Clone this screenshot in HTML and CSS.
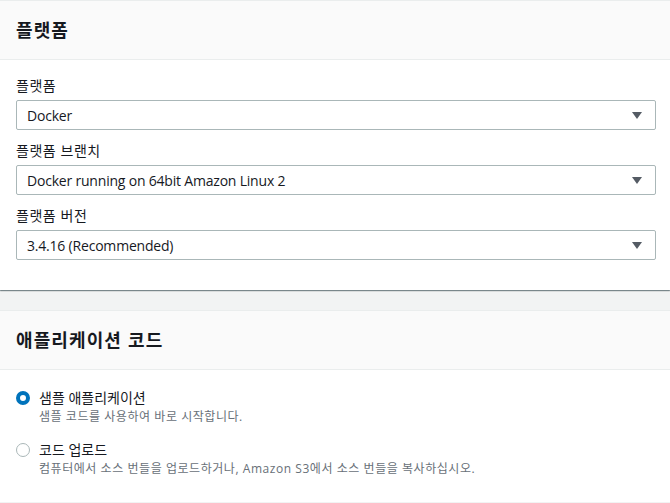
FILE: index.html
```html
<!DOCTYPE html>
<html lang="ko">
<head>
<meta charset="utf-8">
<link rel="stylesheet" href="styles.css">
</head>
<body>
<div class="page">
  <section class="card">
    <div class="card-header"><h2>플랫폼</h2></div>
    <div class="card-body form">
      <div class="field">
        <div class="label">플랫폼</div>
        <div class="select"><span class="value">Docker</span><span class="caret"></span></div>
      </div>
      <div class="field">
        <div class="label">플랫폼 브랜치</div>
        <div class="select"><span class="value">Docker running on 64bit Amazon Linux 2</span><span class="caret"></span></div>
      </div>
      <div class="field">
        <div class="label">플랫폼 버전</div>
        <div class="select"><span class="value">3.4.16 (Recommended)</span><span class="caret"></span></div>
      </div>
    </div>
  </section>
  <section class="card">
    <div class="card-header"><h2>애플리케이션 코드</h2></div>
    <div class="card-body radios">
      <div class="radio-item">
        <span class="radio checked"></span>
        <div class="radio-text">
          <div class="radio-label">샘플 애플리케이션</div>
          <div class="radio-desc">샘플 코드를 사용하여 바로 시작합니다.</div>
        </div>
      </div>
      <div class="radio-item">
        <span class="radio"></span>
        <div class="radio-text">
          <div class="radio-label">코드 업로드</div>
          <div class="radio-desc">컴퓨터에서 소스 번들을 업로드하거나, Amazon S3에서 소스 번들을 복사하십시오.</div>
        </div>
      </div>
    </div>
  </section>
</div>
</body>
</html>
```
FILE: styles.css
```css
html, body {
  margin: 0;
  padding: 0;
}
body {
  background: #f2f3f3;
  font-family: "Open Sans", "Noto Sans CJK KR", sans-serif;
  color: #16191f;
  font-size: 14px;
}
.page {
  display: flex;
  flex-direction: column;
  gap: 20px;
}
.card {
  background: #ffffff;
  border-top: 1px solid #eaeded;
  box-shadow: 0 1px 1px 0 rgba(0, 28, 36, 0.3), 1px 1px 1px 0 rgba(0, 28, 36, 0.15), -1px 1px 1px 0 rgba(0, 28, 36, 0.15);
}
.card-header {
  background: #fafafa;
  border-bottom: 1px solid #eaeded;
  height: 58px;
  display: flex;
  align-items: center;
  padding: 0 16px;
}
.card-header h2 {
  margin: 0;
  font-size: 18px;
  font-weight: 700;
  line-height: 22px;
  letter-spacing: 1.1px;
  font-family: "Noto Sans CJK KR", sans-serif;
  position: relative;
  top: -1px;
}
.form {
  padding: 15px 14px 30px 16px;
  display: flex;
  flex-direction: column;
  gap: 10px;
}
.field {
  display: flex;
  flex-direction: column;
  gap: 5px;
}
.label {
  line-height: 20px;
  font-size: 14px;
  letter-spacing: 0.5px;
  font-family: "Noto Sans CJK KR", sans-serif;
}
.select {
  height: 28px;
  border: 1px solid #aab7b8;
  border-radius: 2px;
  display: flex;
  align-items: center;
  justify-content: space-between;
  padding: 0 13px 0 10px;
  font-size: 14px;
}
.value {
  letter-spacing: -0.2px;
}
.caret {
  width: 0;
  height: 0;
  border-left: 5px solid transparent;
  border-right: 5px solid transparent;
  border-top: 7px solid #545b64;
  margin-top: 1px;
}
.radios {
  padding: 18px 16px 24px 16px;
  display: flex;
  flex-direction: column;
  gap: 14px;
}
.radio-item {
  display: flex;
  gap: 9px;
  align-items: flex-start;
}
.radio {
  box-sizing: border-box;
  width: 14px;
  height: 14px;
  border-radius: 50%;
  border: 1px solid #aab7b8;
  margin-top: 3px;
  flex: none;
}
.radio.checked {
  border: 4px solid #0073bb;
}
.radio-label {
  line-height: 20px;
  font-size: 14px;
}
.radio-desc {
  line-height: 18px;
  font-size: 12px;
  letter-spacing: 0.55px;
  color: #687078;
}
```
